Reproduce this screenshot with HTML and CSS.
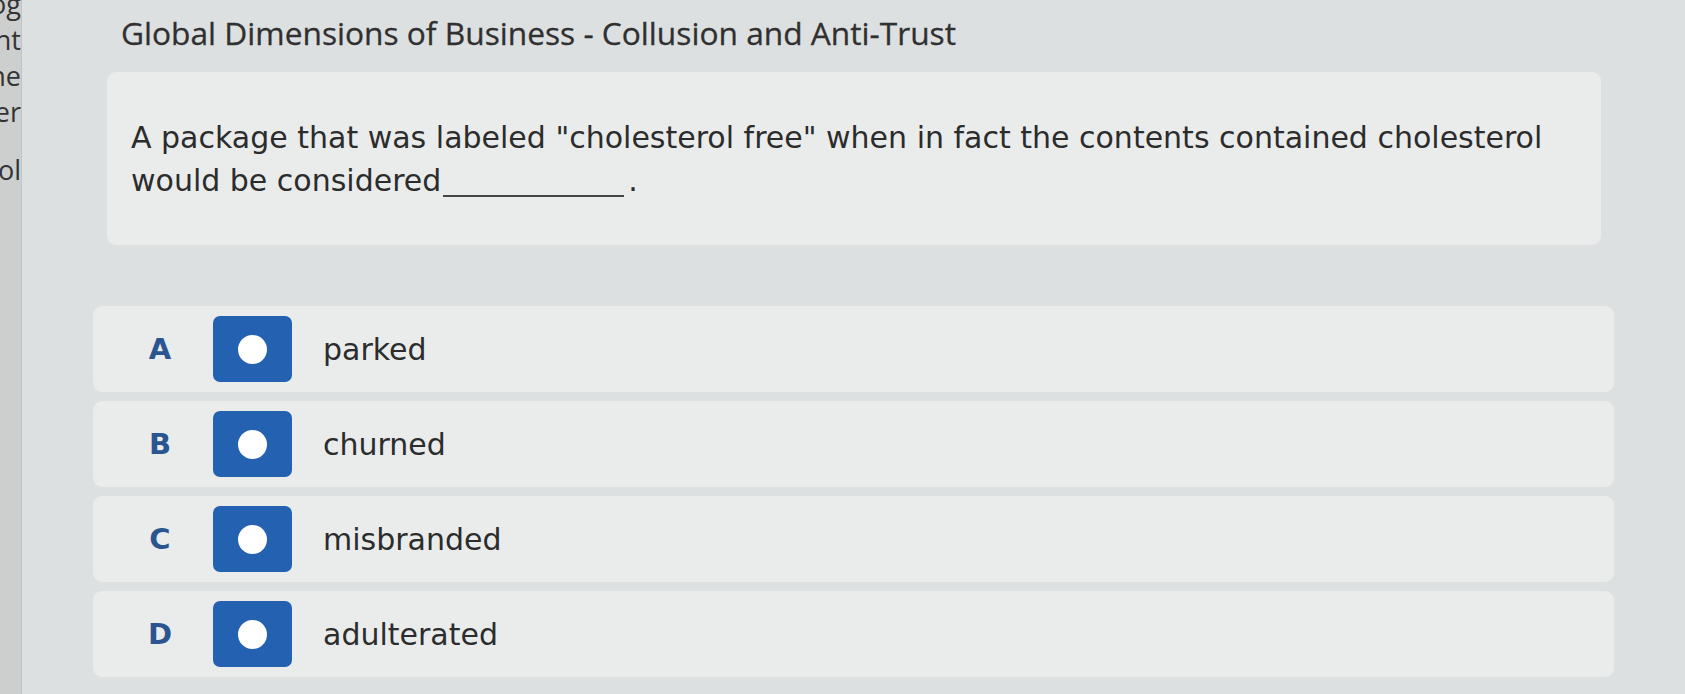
FILE: index.html
```html
<!DOCTYPE html>
<html lang="en">

<head>
    <meta charset="UTF-8" />
    <meta name="viewport" content="width=device-width, initial-scale=1.0" />
    <title>Collusion and Anti-Trust</title>
    <link rel="stylesheet" href="styles.css">
</head>

<body>
    <div class="page">
        <!-- Side panel, mostly scrolled out of view -->
        <aside class="side-panel">
            <p><span>Catalog</span></p>
            <p><span>Content</span></p>
            <p><span>Outline</span></p>
            <p><span>Answer</span></p>
            <p><span>Spool</span></p>
        </aside>

        <main class="quiz">
            <h1 class="quiz-title">Global Dimensions of Business - Collusion and Anti-Trust</h1>

            <div class="question-card">
                <p>A package that was labeled "cholesterol free" when in fact the contents contained cholesterol
                    would be considered<span class="blank"></span>.</p>
            </div>

            <form class="options" id="answerForm">
                <label class="option">
                    <span class="option-letter">A</span>
                    <span class="option-radio"><span class="dot"></span></span>
                    <span class="option-text">parked</span>
                </label>
                <label class="option">
                    <span class="option-letter">B</span>
                    <span class="option-radio"><span class="dot"></span></span>
                    <span class="option-text">churned</span>
                </label>
                <label class="option">
                    <span class="option-letter">C</span>
                    <span class="option-radio"><span class="dot"></span></span>
                    <span class="option-text">misbranded</span>
                </label>
                <label class="option">
                    <span class="option-letter">D</span>
                    <span class="option-radio"><span class="dot"></span></span>
                    <span class="option-text">adulterated</span>
                </label>
            </form>
        </main>
    </div>
</body>

</html>
```

FILE: styles.css
```css
body {
    margin: 0;
    background-color: #dde0e0;
    font-family: "DejaVu Sans", Verdana, sans-serif;
    color: #2c2c2c;
    overflow: hidden;
}

.page {
    display: flex;
    height: 694px;
}

/* Side panel: only the last letters peek out */
.side-panel {
    width: 21px;
    flex-shrink: 0;
    background-color: #cdcfcf;
    border-right: 1px solid #c3c5c5;
    overflow: hidden;
    font-family: "Open Sans", sans-serif;
    font-size: 27px;
    color: #333;
}

.side-panel p {
    margin: 0;
    display: flex;
    justify-content: flex-end;
    white-space: nowrap;
    line-height: 36px;
}

.side-panel p:first-child {
    margin-top: -14px;
}

.side-panel p:last-child {
    margin-top: 22px;
}

.quiz {
    flex: 1;
    padding-left: 71px;
}

.quiz-title {
    margin: 12px 0 0 28px;
    font-family: "Open Sans", sans-serif;
    font-weight: normal;
    font-size: 31.7px;
    line-height: 42px;
    color: #303030;
    -webkit-text-stroke: 0.3px #303030;
}

.question-card {
    margin: 18px 0 0 14px;
    width: 1494px;
    height: 173px;
    box-sizing: border-box;
    padding: 44px 24px 0;
    background-color: #eaecec;
    border-radius: 9px;
}

.question-card p {
    margin: 0;
    font-size: 30px;
    line-height: 43px;
}

.blank {
    display: inline-block;
    width: 181px;
    margin: 0 4px 0 2px;
    border-bottom: 2px solid #444;
    vertical-align: -6px;
}

/* Answer options */
.options {
    margin-top: 61px;
    display: flex;
    flex-direction: column;
    gap: 9px;
    width: 1521px;
}

.option {
    display: flex;
    align-items: center;
    height: 86px;
    background-color: #eaecec;
    border-radius: 9px;
    cursor: pointer;
}

.option-letter {
    width: 126px;
    padding-left: 8px;
    box-sizing: border-box;
    text-align: center;
    font-weight: bold;
    font-size: 29px;
    color: #2b5590;
}

.option-radio {
    width: 79px;
    height: 66px;
    margin-left: -6px;
    background-color: #2462b1;
    border-radius: 7px;
    display: flex;
    align-items: center;
    justify-content: center;
}

.option-radio .dot {
    width: 29px;
    height: 29px;
    border-radius: 50%;
    background-color: #fff;
}

.option-text {
    margin-left: 31px;
    font-size: 30px;
    color: #2c2c2c;
}
```
